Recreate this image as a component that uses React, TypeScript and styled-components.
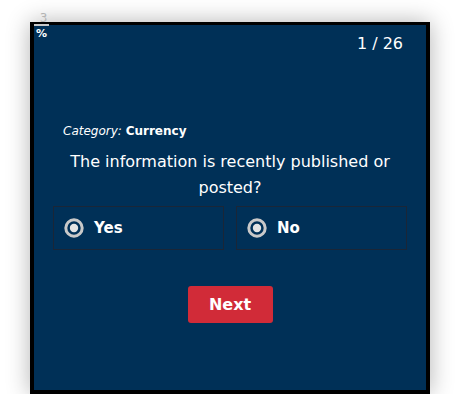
import styled, { createGlobalStyle } from "styled-components"

const GlobalStyle = createGlobalStyle`
    body{
        margin: 0;
        background: #fff;
        font-family: "DejaVu Sans", Verdana, sans-serif;
    }
`

const options = ["Yes", "No"]

export default function App() {
    return (
        <>
            <GlobalStyle />
            <Page>
                <Card>
                    <Progress>
                        <span>3</span>
                        <Bar />
                        <b>%</b>
                    </Progress>
                    <Header>1 / 26</Header>
                    <Body>
                        <CategoryLine>
                            <em>Category:</em> <strong>Currency</strong>
                        </CategoryLine>
                        <Question>The information is recently published or posted?</Question>
                        <Options>
                            {options.map((opt)=>(
                                <Option key={opt}>
                                    <Radio width="20" height="20" viewBox="0 0 20 20">
                                        <circle cx="10" cy="10" r="8.2" fill="none" stroke="#c9c9c9" strokeWidth="3" />
                                        <circle cx="10" cy="10" r="4.2" fill="#e4e4e4" />
                                    </Radio>
                                    {opt}
                                </Option>
                            ))}
                        </Options>
                        <NextButton>Next</NextButton>
                    </Body>
                </Card>
            </Page>
        </>
    )
}

const Page = styled.div`
    padding: 22px 0 0 30px;
`
const Card = styled.div`
    position: relative;
    box-sizing: border-box;
    width: 400px;
    height: 372px;
    border: 4px solid #000;
    border-top-width: 3px;
    background: #003057;
    color: #fff;
    box-shadow: 0px 0px 22px rgba(0, 0, 0, 0.3);
    display: flex;
    flex-direction: column;
`
const Progress = styled.div`
    position: absolute;
    top: -12px;
    left: 0;
    width: 15px;
    display: flex;
    flex-direction: column;
    align-items: center;
    font-size: 12px;
    line-height: 11px;
    span{
        color: #b4b4b4;
        padding-left: 4px;
    }
    b{
        margin-top: 2px;
        color: #fff;
        font-size: 11px;
    }
`
const Bar = styled.div`
    width: 15px;
    height: 2px;
    background: #c8c8c8;
`
const Header = styled.div`
    padding: 9px 23px 0 0;
    text-align: right;
    font-size: 16px;
    line-height: 19px;
`
const Body = styled.div`
    padding: 71px 19px 0;
    display: flex;
    flex-direction: column;
`
const CategoryLine = styled.div`
    padding-left: 10px;
    font-size: 12px;
    line-height: 15px;
    em{
        font-style: italic;
    }
    strong{
        font-weight: 700;
    }
`
const Question = styled.p`
    margin: 10px 0 5px;
    text-align: center;
    font-size: 16px;
    line-height: 26px;
`
const Options = styled.div`
    display: grid;
    grid-template-columns: 1fr 1fr;
    gap: 12px;
`
const Option = styled.label`
    box-sizing: border-box;
    height: 44px;
    border: 1px solid #1a2637;
    display: flex;
    align-items: center;
    gap: 10px;
    padding-left: 10px;
    font-weight: 700;
    font-size: 15px;
`
const Radio = styled.svg`
    display: block;
`
const NextButton = styled.button`
    align-self: center;
    margin-top: 36px;
    width: 85px;
    height: 37px;
    border: none;
    border-radius: 3px;
    background: #d12b38;
    color: #fff;
    font-family: "DejaVu Sans", Verdana, sans-serif;
    font-weight: 700;
    font-size: 16px;
`
